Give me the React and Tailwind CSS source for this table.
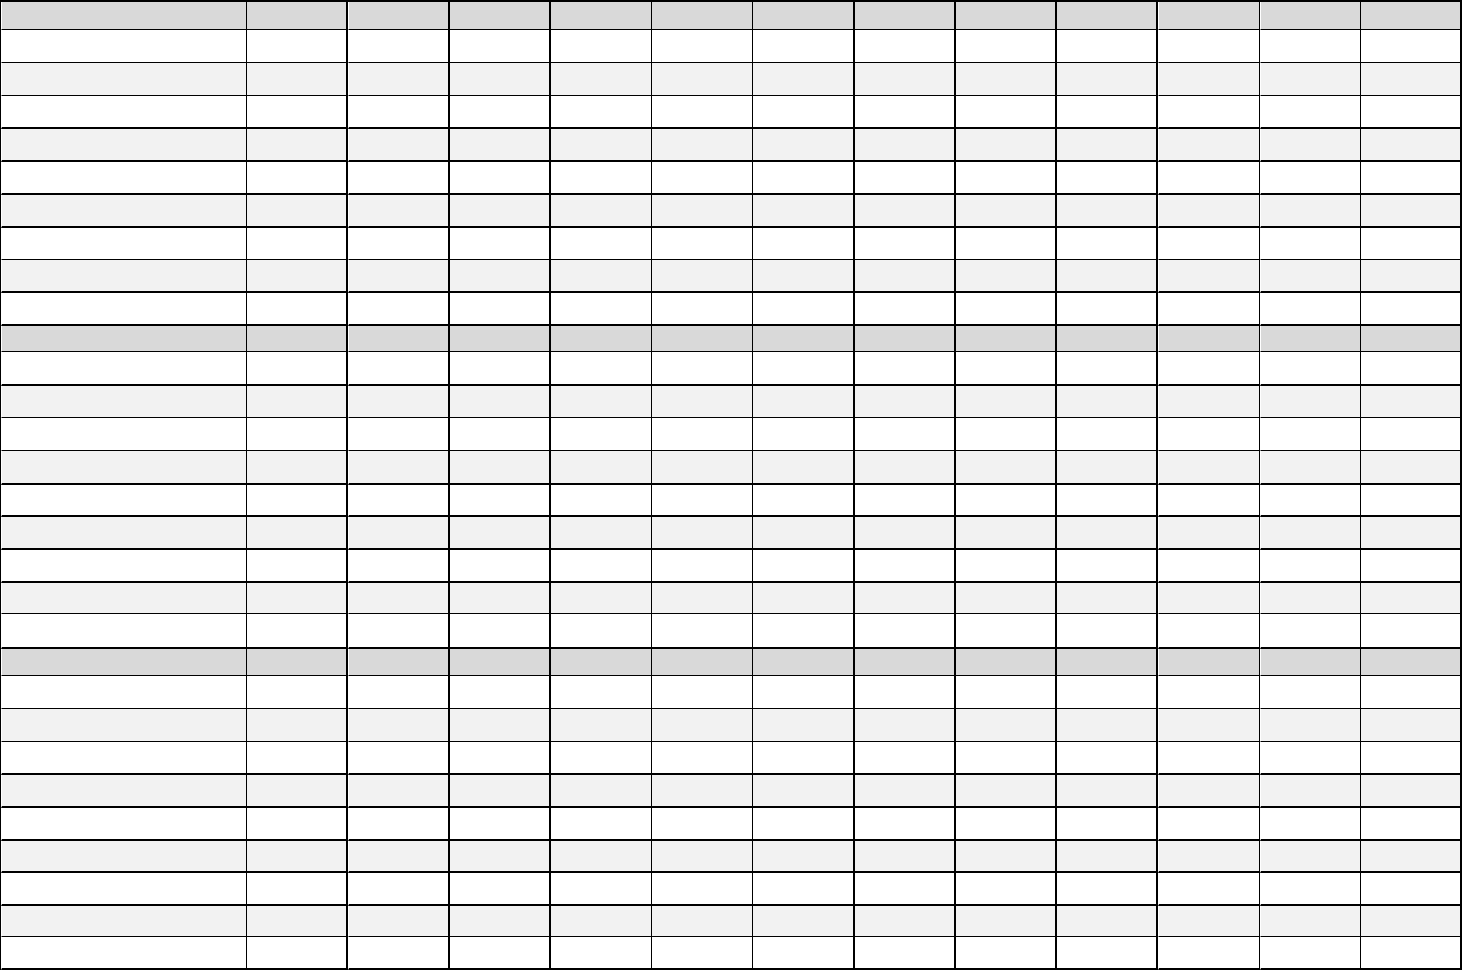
import React from 'react';

// column right-border weights, first column is the wide label column
const columns = [
    'border-r border-l border-l-white',
    'border-r-2',
    'border-r-2 border-l border-l-white',
    'border-r-2',
    'border-r',
    'border-r',
    'border-r-2',
    'border-r-2',
    'border-r-2',
    'border-r-2',
    'border-r border-l border-l-white',
    'border-r border-l border-l-white',
    'border-r-2',
];

const HEAD = 'bg-[#d9d9d9]';
const ALT = 'bg-[#f2f2f2]';
const WHITE = 'bg-white';

const rows = [
    { h: 'h-[28px]', b: 'border-b', bg: HEAD },
    { h: 'h-[33px]', b: 'border-b', bg: WHITE },
    { h: 'h-[33px]', b: 'border-b', bg: ALT },
    { h: 'h-[33px]', b: 'border-b-2', bg: WHITE },
    { h: 'h-[33px]', b: 'border-b-2', bg: ALT },
    { h: 'h-[33px]', b: 'border-b-2', bg: WHITE },
    { h: 'h-[33px]', b: 'border-b-2', bg: ALT },
    { h: 'h-[32px]', b: 'border-b', bg: WHITE },
    { h: 'h-[33px]', b: 'border-b-2', bg: ALT },
    { h: 'h-[33px]', b: 'border-b-2', bg: WHITE },

    { h: 'h-[26px]', b: 'border-b', bg: HEAD },
    { h: 'h-[34px]', b: 'border-b-2', bg: WHITE },
    { h: 'h-[32px]', b: 'border-b', bg: ALT },
    { h: 'h-[33px]', b: 'border-b', bg: WHITE },
    { h: 'h-[34px]', b: 'border-b-2', bg: ALT },
    { h: 'h-[32px]', b: 'border-b-2', bg: WHITE },
    { h: 'h-[33px]', b: 'border-b-2', bg: ALT },
    { h: 'h-[33px]', b: 'border-b-2', bg: WHITE },
    { h: 'h-[31px]', b: 'border-b', bg: ALT },
    { h: 'h-[35px]', b: 'border-b-2', bg: WHITE },

    { h: 'h-[27px]', b: 'border-b', bg: HEAD },
    { h: 'h-[33px]', b: 'border-b', bg: WHITE },
    { h: 'h-[33px]', b: 'border-b', bg: ALT },
    { h: 'h-[33px]', b: 'border-b-2', bg: WHITE },
    { h: 'h-[33px]', b: 'border-b-2', bg: ALT },
    { h: 'h-[33px]', b: 'border-b-2', bg: WHITE },
    { h: 'h-[32px]', b: 'border-b-2', bg: ALT },
    { h: 'h-[33px]', b: 'border-b-2', bg: WHITE },
    { h: 'h-[31px]', b: 'border-b', bg: ALT },
    { h: 'h-[33px]', b: 'border-b-2', bg: WHITE },
];

function App() {
    return (
        <div className="w-[1462px] h-[970px] bg-white overflow-hidden font-['Liberation_Sans',sans-serif]">
            <div className="border-t-2 border-l border-black">
                {rows.map((row, i) => (
                    <div key={i} className={`grid grid-cols-[246px_repeat(12,1fr)] ${row.h}`}>
                        {columns.map((col, j) => (
                            <div
                                key={j}
                                className={`${col} ${row.b} border-r-black border-b-black ${row.bg}`}
                            />
                        ))}
                    </div>
                ))}
            </div>
        </div>
    );
}

export default App;
